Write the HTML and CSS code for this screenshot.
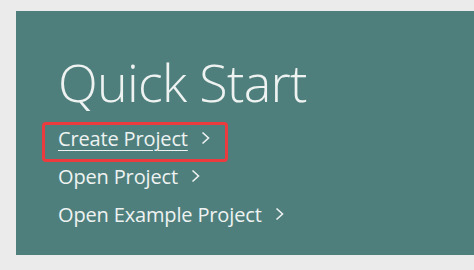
FILE: index.html
```html
<!DOCTYPE html>
<html>
<head>
<meta charset="utf-8">
<link rel="stylesheet" href="styles.css">
</head>
<body>
<div class="page">
  <section class="panel">
    <h1 class="title">Quick Start</h1>
    <ul class="links">
      <li class="item highlighted"><a class="link current">Create Project</a><svg class="chev" width="9" height="14" viewBox="0 0 9 14"><polyline points="1.5,1.5 7.5,7 1.5,12.5" fill="none" stroke="#eef3f2" stroke-width="1.6"/></svg></li>
      <li class="item"><a class="link">Open Project</a><svg class="chev" width="9" height="14" viewBox="0 0 9 14"><polyline points="1.5,1.5 7.5,7 1.5,12.5" fill="none" stroke="#eef3f2" stroke-width="1.6"/></svg></li>
      <li class="item"><a class="link">Open Example Project</a><svg class="chev" width="9" height="14" viewBox="0 0 9 14"><polyline points="1.5,1.5 7.5,7 1.5,12.5" fill="none" stroke="#eef3f2" stroke-width="1.6"/></svg></li>
    </ul>
  </section>
</div>
</body>
</html>
```
FILE: styles.css
```css
html, body {
  margin: 0;
  padding: 0;
}
body {
  width: 474px;
  height: 270px;
  overflow: hidden;
  background: #ebebeb;
  font-family: "Open Sans", "Noto Sans", sans-serif;
}
.page {
  padding: 11px 0 0 16px;
}
.panel {
  background: #4f7f7c;
  height: 244px;
  box-sizing: border-box;
  padding: 40px 0 0 42px;
  color: #eef3f2;
}
.title {
  margin: 0;
  font-weight: 300;
  font-size: 52px;
  line-height: 62px;
  letter-spacing: -0.7px;
}
.links {
  list-style: none;
  margin: 9px 0 0 0;
  padding: 0;
  display: flex;
  flex-direction: column;
}
.item {
  display: flex;
  align-items: center;
  gap: 13px;
  height: 38px;
  font-size: 20px;
  letter-spacing: -0.15px;
  box-sizing: border-box;
  width: max-content;
}
.link {
  color: #eef3f2;
  text-decoration: none;
}
.current {
  text-decoration: underline;
  text-underline-offset: 4px;
  text-decoration-thickness: 1px;
}
.highlighted {
  height: 40px;
  align-items: flex-start;
  line-height: 27px;
  margin: 0 0 -5px -16px;
  padding: 0 15px 0 13px;
  border: 3px solid #ec3b3e;
  border-radius: 4px;
}
.highlighted .chev {
  margin-top: 6px;
}
.chev {
  display: block;
}
```
